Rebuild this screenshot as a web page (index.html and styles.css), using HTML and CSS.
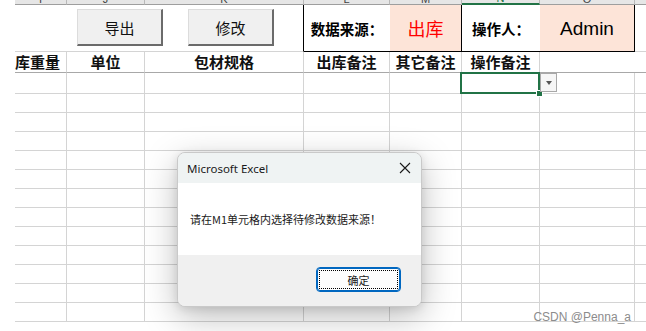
FILE: index.html
```html
<!DOCTYPE html>
<html lang="zh-CN">
<head>
<meta charset="utf-8">
<title>Excel</title>
<link rel="stylesheet" href="styles.css">
</head>
<body>
<div class="sheet">
  <div class="row hdr">
    <div class="h h0"></div>
    <div class="h"><span>I</span></div>
    <div class="h"><span>J</span></div>
    <div class="h"><span>K</span></div>
    <div class="h"><span>L</span></div>
    <div class="h"><span>M</span></div>
    <div class="h hsel"><span>N</span></div>
    <div class="h"><span>O</span></div>
    <div class="h hl"></div>
  </div>

  <div class="row r1">
    <div class="c c0"></div>
    <div class="c merged">
      <div class="xbtn">导出</div>
      <div class="xbtn">修改</div>
    </div>
    <div class="c box lbl">数据来源：</div>
    <div class="c box peach red sep">出库</div>
    <div class="c box lbl">操作人：</div>
    <div class="c box peach admin sep">Admin</div>
    <div class="c cl"></div>
  </div>

  <div class="row r2">
    <div class="c c0"></div>
    <div class="c th left">库重量</div>
    <div class="c th">单位</div>
    <div class="c th">包材规格</div>
    <div class="c th">出库备注</div>
    <div class="c th">其它备注</div>
    <div class="c th">操作备注</div>
    <div class="c nob"></div>
    <div class="c cl"></div>
  </div>

  <div class="row d first">
    <div class="c c0"></div><div class="c"></div><div class="c"></div><div class="c"></div><div class="c"></div><div class="c"></div>
    <div class="c sel"><span class="handle"></span><span class="dd"><span class="tri"></span></span></div>
    <div class="c"></div><div class="c cl"></div>
  </div>
  <div class="row d"><div class="c c0"></div><div class="c"></div><div class="c"></div><div class="c"></div><div class="c"></div><div class="c"></div><div class="c"></div><div class="c"></div><div class="c cl"></div></div>
  <div class="row d"><div class="c c0"></div><div class="c"></div><div class="c"></div><div class="c"></div><div class="c"></div><div class="c"></div><div class="c"></div><div class="c"></div><div class="c cl"></div></div>
  <div class="row d"><div class="c c0"></div><div class="c"></div><div class="c"></div><div class="c"></div><div class="c"></div><div class="c"></div><div class="c"></div><div class="c"></div><div class="c cl"></div></div>
  <div class="row d"><div class="c c0"></div><div class="c"></div><div class="c"></div><div class="c"></div><div class="c"></div><div class="c"></div><div class="c"></div><div class="c"></div><div class="c cl"></div></div>
  <div class="row d"><div class="c c0"></div><div class="c"></div><div class="c"></div><div class="c"></div><div class="c"></div><div class="c"></div><div class="c"></div><div class="c"></div><div class="c cl"></div></div>
  <div class="row d"><div class="c c0"></div><div class="c"></div><div class="c"></div><div class="c"></div><div class="c"></div><div class="c"></div><div class="c"></div><div class="c"></div><div class="c cl"></div></div>
  <div class="row d"><div class="c c0"></div><div class="c"></div><div class="c"></div><div class="c"></div><div class="c"></div><div class="c"></div><div class="c"></div><div class="c"></div><div class="c cl"></div></div>
  <div class="row d"><div class="c c0"></div><div class="c"></div><div class="c"></div><div class="c"></div><div class="c"></div><div class="c"></div><div class="c"></div><div class="c"></div><div class="c cl"></div></div>
  <div class="row d"><div class="c c0"></div><div class="c"></div><div class="c"></div><div class="c"></div><div class="c"></div><div class="c"></div><div class="c"></div><div class="c"></div><div class="c cl"></div></div>
  <div class="row d"><div class="c c0"></div><div class="c"></div><div class="c"></div><div class="c"></div><div class="c"></div><div class="c"></div><div class="c"></div><div class="c"></div><div class="c cl"></div></div>
  <div class="row d"><div class="c c0"></div><div class="c"></div><div class="c"></div><div class="c"></div><div class="c"></div><div class="c"></div><div class="c"></div><div class="c"></div><div class="c cl"></div></div>
  <div class="row d"><div class="c c0"></div><div class="c"></div><div class="c"></div><div class="c"></div><div class="c"></div><div class="c"></div><div class="c"></div><div class="c"></div><div class="c cl"></div></div>
</div>

<div class="dialog">
  <div class="dtitle">
    <span class="dname">Microsoft Excel</span>
    <svg class="dclose" width="12" height="12" viewBox="0 0 12 12"><path d="M1 1 L11 11 M11 1 L1 11" stroke="#1a1a1a" stroke-width="1.1" fill="none"/></svg>
  </div>
  <div class="dbody">请在M1单元格内选择待修改数据来源！</div>
  <div class="dfoot">
    <div class="okbtn"><span class="okin">确定</span></div>
  </div>
</div>

<div class="wm">CSDN @Penna_a</div>
</body>
</html>
```

FILE: styles.css
```css
html, body {
  margin: 0;
  padding: 0;
  background: #ffffff;
  width: 646px;
  height: 331px;
  overflow: hidden;
  font-family: "Noto Sans CJK SC", "Noto Sans", sans-serif;
}

.sheet {
  width: 646px;
}

.row {
  display: grid;
  grid-template-columns: 15px 52px 78px 159px 86px 72px 78px 95px 1fr;
}

.c {
  box-sizing: border-box;
  border-right: 1px solid #d4d4d4;
  border-bottom: 1px solid #d4d4d4;
}

.c0 {
  border: none;
}

.cl {
  border-right: none;
}

/* column header strip */
.hdr {
  height: 5px;
}

.h {
  box-sizing: border-box;
  height: 5px;
  background: #e6e6e6;
  border-right: 1px solid #b9b9b9;
  border-bottom: 1px solid #9e9e9e;
  overflow: hidden;
  display: flex;
  justify-content: center;
  align-items: flex-end;
  font-family: "Liberation Sans", sans-serif;
  font-size: 11px;
  color: #444;
}

.h span {
  line-height: 11px;
  margin-bottom: -1px;
}

.h0 {
  background: transparent;
  border: none;
}

.hl {
  border-right: none;
}

.hsel {
  border-bottom: 2px solid #217346;
  color: #217346;
}

/* row 1 */
.r1 {
  height: 47px;
}

.merged {
  grid-column: span 3;
  border-right: 1px solid #000;
  display: flex;
  align-items: flex-start;
  gap: 25px;
  padding: 4px 0 0 62px;
}

.xbtn {
  box-sizing: border-box;
  width: 86px;
  height: 37px;
  background: #f0f0f0;
  border-top: 1px solid #dcdcdc;
  border-left: 1px solid #dcdcdc;
  border-right: 2px solid #6b6b6b;
  border-bottom: 2px solid #6b6b6b;
  display: flex;
  align-items: center;
  justify-content: center;
  font-size: 15px;
  color: #111;
}

.box {
  border-right: none;
  border-bottom: 1px solid #000;
  display: flex;
  align-items: center;
  justify-content: center;
  color: #000;
}

.box.sep {
  border-right: 1px solid #000;
}

.lbl {
  font-size: 14.5px;
  font-weight: 700;
}

.peach {
  background: #fde4d8;
}

.red {
  color: #ff0000;
  font-size: 18px;
}

.admin {
  font-family: "Liberation Sans", sans-serif;
  font-size: 19px;
  padding-top: 2px;
}

/* row 2 */
.r2 {
  height: 21px;
}

.r2 .c {
  border-bottom-color: #a8a8a8;
}

.th {
  font-size: 15px;
  font-weight: 700;
  color: #111;
  display: flex;
  align-items: center;
  justify-content: center;
  line-height: 1;
  padding-bottom: 1px;
}

.th.left {
  justify-content: flex-start;
}

.nob {
  border-right: none;
}

/* data rows */
.d {
  height: 19px;
}

.d.first {
  height: 21px;
}

.sel {
  position: relative;
}

.sel::after {
  content: "";
  position: absolute;
  left: -2px;
  top: -1px;
  right: -1px;
  bottom: -1px;
  border: 2px solid #217346;
}

.handle {
  position: absolute;
  right: -4px;
  bottom: -4px;
  width: 5px;
  height: 5px;
  background: #217346;
  border: 1px solid #fff;
  z-index: 2;
}

.dd {
  position: absolute;
  left: calc(100% + 1px);
  top: 0;
  width: 17px;
  height: 19px;
  box-sizing: border-box;
  border: 1px solid #a8a8a8;
  background: #f6f6f6;
  display: flex;
  align-items: center;
  justify-content: center;
  z-index: 2;
}

.tri {
  width: 0;
  height: 0;
  border-left: 3.5px solid transparent;
  border-right: 3.5px solid transparent;
  border-top: 4px solid #555;
}

/* dialog */
.dialog {
  position: absolute;
  left: 177px;
  top: 152px;
  width: 245px;
  height: 155px;
  box-sizing: border-box;
  border: 1px solid #c9c9c9;
  border-radius: 8px;
  overflow: hidden;
  background: #f0f0f0;
  box-shadow: 0 10px 34px rgba(0, 0, 0, 0.26), 0 2px 8px rgba(0, 0, 0, 0.1);
  display: flex;
  flex-direction: column;
}

.dtitle {
  height: 30px;
  background: #eff3f3;
  display: flex;
  align-items: center;
  justify-content: space-between;
  padding: 0 10px 0 9px;
}

.dname {
  font-family: "Noto Sans", sans-serif;
  font-size: 11.5px;
  color: #1a1a1a;
}

.dclose {
  display: block;
}

.dbody {
  height: 72px;
  background: #ffffff;
  display: flex;
  align-items: center;
  padding: 0 0 0 12px;
  font-size: 11px;
  color: #1a1a1a;
  box-sizing: border-box;
  padding-bottom: 1px;
}

.dfoot {
  flex: 1;
  background: #f0f0f0;
  display: flex;
  justify-content: flex-end;
  align-items: flex-start;
  padding: 12px 20px 0 0;
}

.okbtn {
  box-sizing: border-box;
  width: 85px;
  height: 25px;
  border: 1px solid #0067c0;
  border-radius: 4px;
  background: #fdfdfd;
  padding: 2px;
  box-shadow: inset 0 0 0 1px #0067c0;
}

.okin {
  box-sizing: border-box;
  display: flex;
  height: 100%;
  align-items: center;
  justify-content: center;
  border: 1px dotted #000;
  font-size: 11px;
  color: #1a1a1a;
}

.wm {
  position: absolute;
  right: 15px;
  bottom: 7px;
  font-family: "Liberation Sans", sans-serif;
  font-size: 12px;
  color: #8c8c8c;
}
```
